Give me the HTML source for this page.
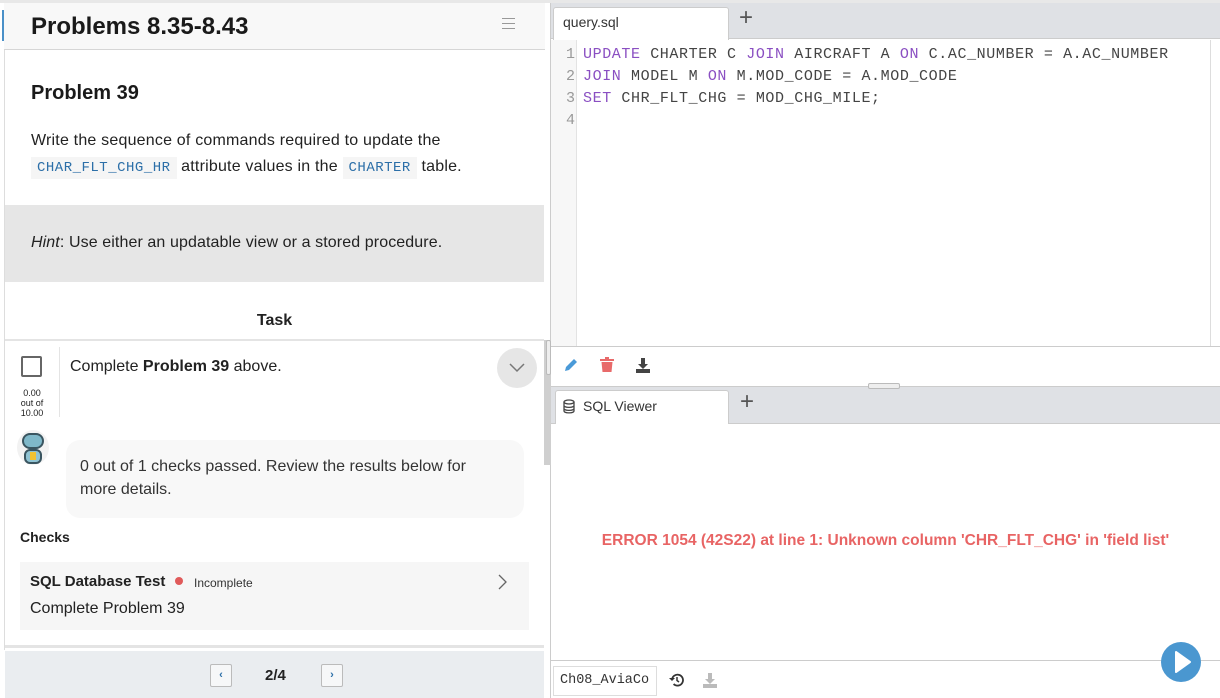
<!DOCTYPE html>
<html><head><style>
*{box-sizing:border-box;margin:0;padding:0}
body{width:1220px;height:698px;overflow:hidden;background:#fff;font-family:"Liberation Sans",sans-serif;color:#222;position:relative}
.abs{position:absolute}
.code{font-family:"Liberation Mono",monospace}
.kw{color:#8a4fc2}
.ic{background:#f5f5f5;color:#2c6fa8;font-family:"Liberation Mono",monospace;font-size:14px;padding:3px 6px}
</style></head><body>
<div class="abs" style="left:0;top:0;width:551px;height:698px;background:#fff;border-right:1px solid #ccc"></div>
<div class="abs" style="left:0;top:0;width:1220px;height:3px;background:#e8e8e8"></div>
<div class="abs" style="left:4px;top:3px;width:541px;height:47px;background:#f8f8f8;border-bottom:1px solid #d6d6d6"></div>
<div class="abs" style="left:2px;top:10px;width:2px;height:31px;background:#4a90c8"></div>
<div class="abs" style="left:31px;top:13px;font-size:24px;font-weight:bold;color:#1a1a1a">Problems 8.35-8.43</div>
<div class="abs" style="left:502px;top:18px;width:13px;height:11px;border-top:1px solid #999;border-bottom:1px solid #999"><div style="margin-top:4px;border-top:1px solid #999"></div></div>
<div class="abs" style="left:4px;top:50px;width:1px;height:600px;background:#ddd"></div>
<div class="abs" style="left:31px;top:82px;font-size:20px;font-weight:bold;color:#1a1a1a">Problem 39</div>
<div class="abs" style="left:31px;top:128px;font-size:16px;line-height:26px;width:510px;letter-spacing:0.2px">Write the sequence of commands required to update the<br><span class="ic" style="letter-spacing:0.5px">CHAR_FLT_CHG_HR</span> attribute values in the <span class="ic" style="letter-spacing:0.5px">CHARTER</span> table.</div>
<div class="abs" style="left:5px;top:205px;width:539px;height:77px;background:#e6e6e6"></div>
<div class="abs" style="left:31px;top:234px;font-size:16px;letter-spacing:0.1px"><i>Hint</i>: Use either an updatable view or a stored procedure.</div>
<div class="abs" style="left:5px;top:312px;width:539px;text-align:center;font-size:16px;font-weight:bold">Task</div>
<div class="abs" style="left:5px;top:339px;width:539px;height:2px;background:#e4e4e4"></div>
<div class="abs" style="left:21px;top:356px;width:21px;height:21px;border:2px solid #666;border-radius:2px"></div>
<div class="abs" style="left:12px;top:388px;width:40px;text-align:center;font-size:9px;line-height:10px">0.00<br>out of<br>10.00</div>
<div class="abs" style="left:59px;top:347px;width:1px;height:70px;background:#e4e4e4"></div>
<div class="abs" style="left:70px;top:358px;font-size:16px">Complete <b>Problem 39</b> above.</div>
<div class="abs" style="left:497px;top:348px;width:40px;height:40px;border-radius:50%;background:#e6e6e6"></div>
<svg class="abs" style="left:508px;top:361px" width="18" height="12"><path d="M2 3l7 7 7-7" stroke="#777" stroke-width="1.5" fill="none"/></svg>
<div class="abs" style="left:17px;top:430px;width:32px;height:35px;border-radius:50%;background:#f2f2f2"></div>
<div class="abs" style="left:22px;top:433px;width:22px;height:16px;border-radius:8px;background:#7fb8c9;border:2px solid #3a5560"></div>
<div class="abs" style="left:24px;top:449px;width:18px;height:15px;border-radius:6px;background:#8fc3d3;border:2px solid #3a5560"></div>
<div class="abs" style="left:30px;top:452px;width:6px;height:8px;background:#f1c232"></div>
<div class="abs" style="left:66px;top:440px;width:458px;height:78px;background:#f8f8f8;border-radius:14px"></div>
<div class="abs" style="left:80px;top:455px;font-size:16px;line-height:23px;width:405px;color:#333">0 out of 1 checks passed. Review the results below for more details.</div>
<div class="abs" style="left:20px;top:529px;font-size:14px;font-weight:bold">Checks</div>
<div class="abs" style="left:20px;top:562px;width:509px;height:68px;background:#f6f6f6"></div>
<div class="abs" style="left:30px;top:573px;font-size:15px;font-weight:bold">SQL Database Test</div>
<div class="abs" style="left:175px;top:577px;width:8px;height:8px;border-radius:50%;background:#e05a5a"></div>
<div class="abs" style="left:194px;top:576px;font-size:12px;color:#333">Incomplete</div>
<svg class="abs" style="left:497px;top:574px" width="12" height="16"><path d="M2 1l7 7-7 7" stroke="#666" stroke-width="1.3" fill="none"/></svg>
<div class="abs" style="left:30px;top:600px;font-size:16px">Complete Problem 39</div>
<div class="abs" style="left:5px;top:645px;width:539px;height:3px;background:#e4e4e4"></div>
<div class="abs" style="left:5px;top:651px;width:539px;height:47px;background:#eaedf0"></div>
<div class="abs" style="left:210px;top:664px;width:22px;height:23px;border:1px solid #bbb;border-radius:2px;background:#f6f7f8;color:#2c6fa8;font-size:11px;text-align:center;line-height:21px;font-weight:bold">‹</div>
<div class="abs" style="left:265px;top:667px;font-size:15px;font-weight:bold">2/4</div>
<div class="abs" style="left:321px;top:664px;width:22px;height:23px;border:1px solid #bbb;border-radius:2px;background:#f6f7f8;color:#2c6fa8;font-size:11px;text-align:center;line-height:21px;font-weight:bold">›</div>
<div class="abs" style="left:544px;top:340px;width:7px;height:125px;background:#cfcfcf"></div>
<div class="abs" style="left:546px;top:340px;width:5px;height:35px;background:#eee;border:1px solid #bbb;border-radius:2px"></div>
<div class="abs" style="left:551px;top:3px;width:669px;height:36px;background:#dfe1e5;border-bottom:1px solid #ccc"></div>
<div class="abs" style="left:553px;top:7px;width:176px;height:33px;background:#fff;border:1px solid #ccc;border-bottom:none;border-radius:3px 3px 0 0"></div>
<div class="abs" style="left:563px;top:14px;font-size:14px;color:#333">query.sql</div>
<div class="abs" style="left:739px;top:4px;font-size:24px;color:#555">+</div>
<div class="abs" style="left:551px;top:40px;width:26px;height:306px;background:#f7f7f7;border-right:1px solid #e3e3e3"></div>
<div class="abs" style="left:1210px;top:40px;width:1px;height:306px;background:#ddd"></div>
<div class="abs code" style="left:551px;top:44px;width:24px;text-align:right;font-size:15px;line-height:22px;color:#999">1<br>2<br>3<br>4</div>
<div class="abs code" style="left:583px;top:44px;font-size:15px;line-height:22px;color:#444;letter-spacing:0.6px;white-space:pre"><span class="kw">UPDATE</span> CHARTER C <span class="kw">JOIN</span> AIRCRAFT A <span class="kw">ON</span> C.AC_NUMBER = A.AC_NUMBER
<span class="kw">JOIN</span> MODEL M <span class="kw">ON</span> M.MOD_CODE = A.MOD_CODE
<span class="kw">SET</span> CHR_FLT_CHG = MOD_CHG_MILE;</div>
<div class="abs" style="left:551px;top:346px;width:669px;height:1px;background:#ccc"></div>
<svg class="abs" style="left:563px;top:357px" width="16" height="16"><path d="M2 14l1-4 8-8 3 3-8 8z" fill="#4a9ad8"/></svg>
<svg class="abs" style="left:600px;top:357px" width="14" height="16"><rect x="0" y="2" width="14" height="2" fill="#e86a6a"/><rect x="5" y="0" width="4" height="2" fill="#e86a6a"/><path d="M1.5 5h11l-1 10h-9z" fill="#e86a6a"/></svg>
<svg class="abs" style="left:635px;top:357px" width="16" height="16"><path d="M6 1h4v6h3l-5 5-5-5h3z" fill="#444"/><rect x="1" y="12" width="14" height="4" fill="#444"/></svg>
<div class="abs" style="left:551px;top:386px;width:669px;height:38px;background:#dfe1e5;border-top:1px solid #ccc;border-bottom:1px solid #ccc"></div>
<div class="abs" style="left:868px;top:383px;width:32px;height:6px;background:#eee;border:1px solid #bbb;border-radius:2px"></div>
<div class="abs" style="left:555px;top:390px;width:174px;height:34px;background:#fff;border:1px solid #ccc;border-bottom:none;border-radius:3px 3px 0 0"></div>
<svg class="abs" style="left:563px;top:399px" width="12" height="15"><ellipse cx="6" cy="3" rx="5" ry="2" fill="none" stroke="#444" stroke-width="1.3"/><path d="M1 3v9c0 2.5 10 2.5 10 0V3M1 6.5c0 2.5 10 2.5 10 0M1 9.5c0 2.5 10 2.5 10 0" fill="none" stroke="#444" stroke-width="1.3"/></svg>
<div class="abs" style="left:583px;top:398px;font-size:14px;color:#333">SQL Viewer</div>
<div class="abs" style="left:740px;top:388px;font-size:24px;color:#555">+</div>
<div class="abs" style="left:551px;top:532px;width:669px;text-align:center;font-size:15.5px;font-weight:bold;color:#e86464">ERROR 1054 (42S22) at line 1: Unknown column 'CHR_FLT_CHG' in 'field list'</div>
<div class="abs" style="left:551px;top:660px;width:669px;height:1px;background:#ccc"></div>
<div class="abs code" style="left:553px;top:666px;width:104px;height:30px;border:1px solid #ddd;font-size:13.5px;line-height:28px;padding-left:6px;color:#333">Ch08_AviaCo</div>
<svg class="abs" style="left:669px;top:672px" width="16" height="16"><path d="M3 8a5.5 5.5 0 1 1 1.6 4" fill="none" stroke="#333" stroke-width="1.8"/><path d="M0 6l3 3 3-3z" fill="#333"/><path d="M8 5v3.5l2 1.5" stroke="#333" stroke-width="1.5" fill="none"/></svg>
<svg class="abs" style="left:703px;top:672px" width="14" height="16"><path d="M5 1h4v6h3l-5 5-5-5h3z" fill="#bbb"/><rect x="0" y="12" width="14" height="4" fill="#bbb"/></svg>
<div class="abs" style="left:1161px;top:642px;width:40px;height:40px;border-radius:50%;background:#4a97d0"></div>
<svg class="abs" style="left:1161px;top:642px" width="40" height="40"><path d="M15 10l14 10-14 10z" fill="#fff" stroke="#fff" stroke-width="2" stroke-linejoin="round"/></svg>
</body></html>
